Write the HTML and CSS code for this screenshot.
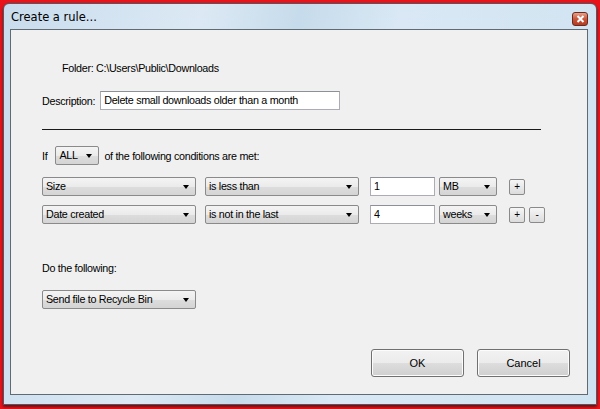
FILE: index.html
```html
<!DOCTYPE html>
<html lang="en">
<head>
  <meta charset="UTF-8">
  <title>Create a rule...</title>
  <link rel="stylesheet" href="styles.css">
</head>
<body>
  <div class="window">
    <div class="titlebar">
      <span class="title">Create a rule...</span>
      <span class="close">
        <svg width="9" height="8" viewBox="0 0 9 8"><path d="M1.5 1 L7.5 7 M7.5 1 L1.5 7" stroke="#fff" stroke-width="2"/></svg>
      </span>
    </div>
    <div class="client">
      <div class="folder">Folder: C:\Users\Public\Downloads</div>

      <div class="desc-row">
        <span>Description:</span>
        <div class="input desc">Delete small downloads older than a month</div>
      </div>

      <div class="rule"></div>

      <div class="if-row">
        <span>If</span>
        <div class="combo all">ALL</div>
        <span>of the following conditions are met:</span>
      </div>

      <div class="cond">
        <div class="combo field">Size</div>
        <div class="combo op">is less than</div>
        <div class="input val">1</div>
        <div class="combo unit">MB</div>
        <div class="btns"><span class="sm">+</span></div>
      </div>
      <div class="cond">
        <div class="combo field">Date created</div>
        <div class="combo op">is not in the last</div>
        <div class="input val">4</div>
        <div class="combo unit">weeks</div>
        <div class="btns"><span class="sm">+</span><span class="sm">-</span></div>
      </div>

      <div class="do-label">Do the following:</div>
      <div class="combo field">Send file to Recycle Bin</div>

      <div class="footer">
        <button class="btn">OK</button>
        <button class="btn">Cancel</button>
      </div>
    </div>
  </div>
</body>
</html>
```

FILE: styles.css
```css
* { box-sizing: border-box; }
html, body { height: 100%; }
body {
  margin: 0;
  background: #e8141a;
  padding: 3px 3px 4px 3px;
  font-family: "Liberation Sans", Arial, sans-serif;
  font-size: 10.75px;
  letter-spacing: -0.3px;
  color: #000;
}
.window {
  height: 100%;
  display: flex;
  flex-direction: column;
  border: 1px solid #4b5a66;
  border-radius: 6px 6px 0 0;
  background: linear-gradient(100deg, #c9dced 0%, #dce9f4 30%, #c6dbeb 45%, #d9e8f4 60%, #d0e3f1 100%);
  padding: 0 8px 9px 6px;
  box-shadow: 0 2px 3px rgba(0,0,0,0.5);
}
.titlebar {
  height: 25px;
  display: flex;
  align-items: center;
  justify-content: space-between;
  flex-shrink: 0;
}
.title {
  font-family: "DejaVu Sans", sans-serif;
  font-size: 11.5px;
  letter-spacing: 0;
  padding-left: 1px;
  margin-top: 1px;
}
.close {
  width: 16px;
  height: 14px;
  margin-top: 4px;
  border: 1px solid #6b2a20;
  border-radius: 3px;
  background: linear-gradient(#e6a38d, #c9553a 50%, #b33b22);
  display: flex;
  align-items: center;
  justify-content: center;
}
.client {
  flex: 1;
  display: flex;
  flex-direction: column;
  align-items: flex-start;
  background: #f0f0f0;
  border: 1px solid #5f6a72;
  padding: 32px 17px 17px 31px;
}
.folder { margin-left: 20px; line-height: 13px; }
.desc-row {
  display: flex;
  align-items: center;
  gap: 5px;
  margin-top: 16px;
}
.input {
  background: #fff;
  border: 1px solid #abadb3;
  border-top-color: #8e9097;
  height: 19px;
  line-height: 17px;
  padding: 0 3px;
  white-space: nowrap;
}
.desc { width: 240px; }
.rule {
  width: 499px;
  height: 1px;
  background: #1a1a1a;
  margin-top: 19px;
}
.if-row {
  display: flex;
  align-items: center;
  margin-top: 16px;
}
.if-row .all { width: 44px; margin: 0 5px 0 8px; }
.combo {
  position: relative;
  height: 19px;
  line-height: 17px;
  padding: 0 3px;
  border: 1px solid #8a8a8a;
  border-radius: 2px;
  background: linear-gradient(#f4f4f4 0%, #ebebeb 50%, #dddddd 51%, #d4d4d4 100%);
  white-space: nowrap;
}
.combo::after {
  content: "";
  position: absolute;
  right: 6px;
  top: 7px;
  border-left: 3.5px solid transparent;
  border-right: 3.5px solid transparent;
  border-top: 4px solid #000;
}
.cond {
  display: flex;
  align-items: center;
  margin-top: 12px;
}
.cond + .cond { margin-top: 9px; }
.field { width: 154px; }
.op { width: 154px; margin-left: 9px; }
.val { width: 65px; margin-left: 11px; }
.unit { width: 58px; margin-left: 4px; }
.btns { display: flex; gap: 4px; margin-left: 12px; }
.sm {
  width: 16px;
  height: 16px;
  border: 1px solid #8a8a8a;
  border-radius: 2px;
  background: linear-gradient(#f6f6f6, #dcdcdc);
  display: flex;
  align-items: center;
  justify-content: center;
  font-size: 10px;
}
.do-label { margin-top: 38px; line-height: 13px; }
.do-label + .combo { margin-top: 15px; }
.footer {
  margin-top: auto;
  align-self: flex-end;
  display: flex;
  gap: 13px;
}
.btn {
  width: 93px;
  height: 28px;
  font-family: "Liberation Sans", Arial, sans-serif;
  font-size: 11px;
  color: #000;
  border: 1px solid #707070;
  border-radius: 3px;
  background: linear-gradient(#f2f2f2 0%, #ebebeb 50%, #dddddd 51%, #cfcfcf 100%);
  box-shadow: inset 0 0 0 1px #fcfcfc;
}
```
